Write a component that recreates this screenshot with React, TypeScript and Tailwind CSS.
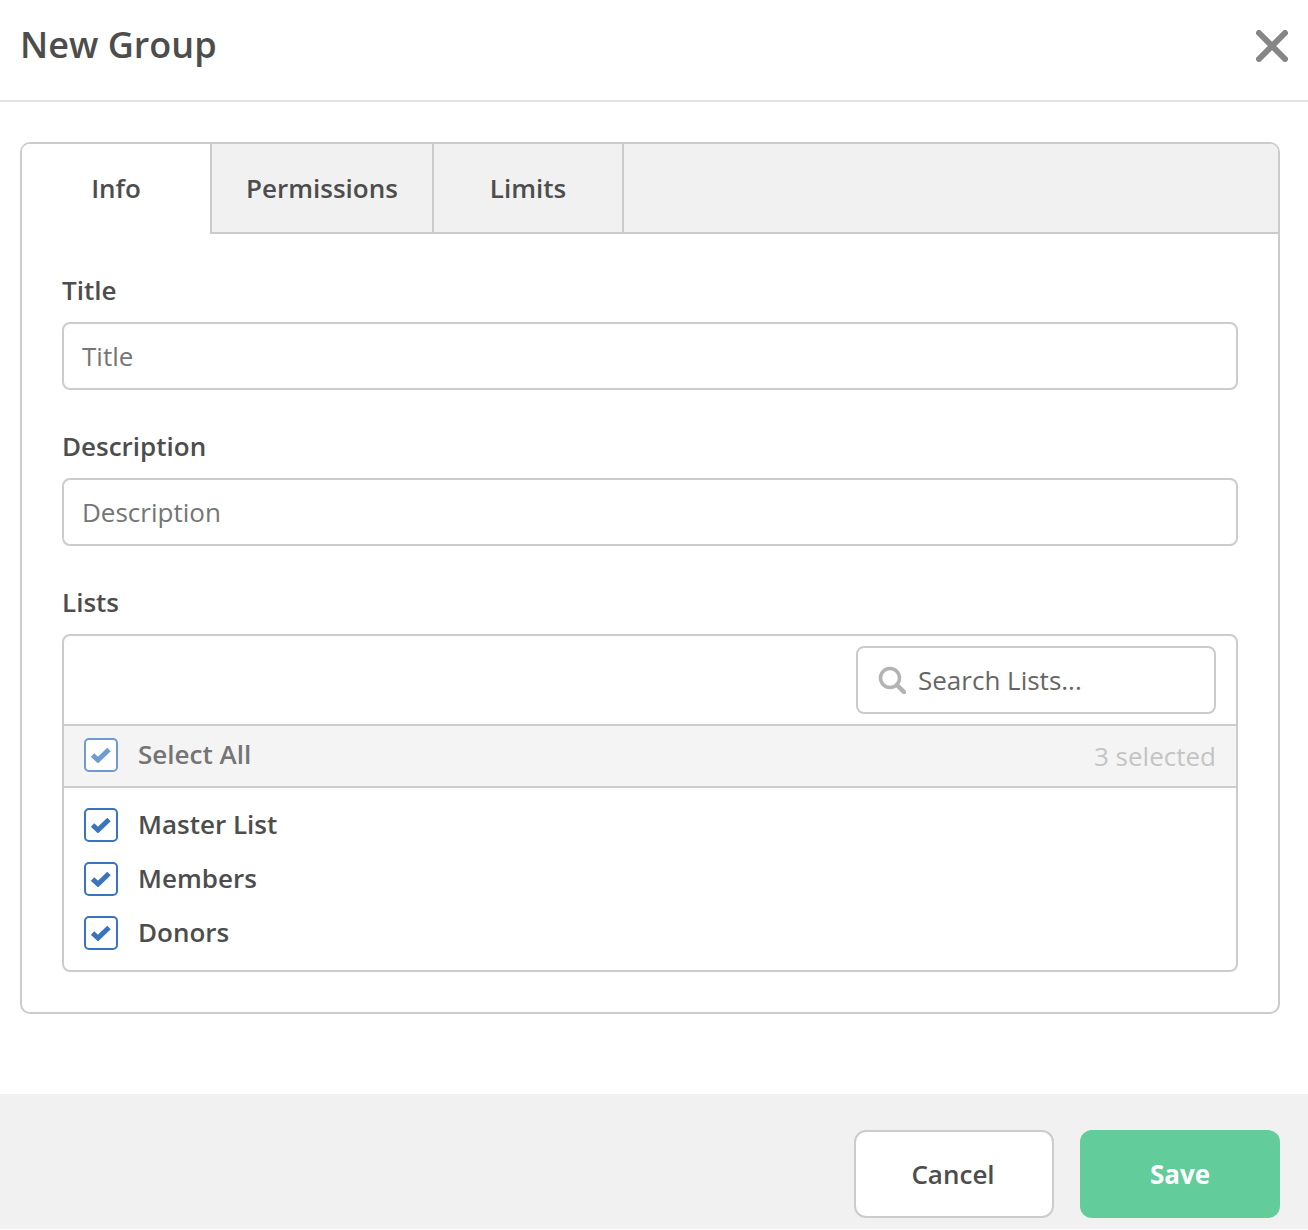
const lists = ["Master List", "Members", "Donors"];

function CheckBox({ faded }: { faded?: boolean }) {
  return (
    <span
      className={`flex h-[34px] w-[34px] shrink-0 items-center justify-center rounded-[5px] border-2 bg-white ${
        faded ? "border-[#6f9bd3]" : "border-[#3a74bd]"
      }`}
    >
      <svg width="20" height="16" viewBox="0 0 20 16">
        <path
          d="M1.5 8 7 13 18 2.5"
          fill="none"
          stroke={faded ? "#6f9bd3" : "#3a74bd"}
          strokeWidth="5"
        />
      </svg>
    </span>
  );
}

function Field({ label }: { label: string }) {
  return (
    <div className="flex flex-col">
      <label className="h-[46px] text-[26px] leading-[28px] font-semibold text-[#4d4d4d]">{label}</label>
      <input
        placeholder={label}
        className="h-[68px] w-full rounded-[8px] border-2 border-[#cccccc] bg-white px-[18px] text-[26px] text-[#4d4d4d] outline-none placeholder:text-[#757575]"
      />
    </div>
  );
}

export default function App() {
  return (
    <div className="flex h-[1230px] w-[1308px] flex-col bg-white font-['Open_Sans',sans-serif]">
      <header className="flex h-[102px] shrink-0 items-center justify-between border-b-2 border-[#e3e3e3] pr-[20px] pb-[12px] pl-[20px]">
        <h1 className="mt-[2px] text-[36px] leading-[44px] font-semibold text-[#4d4d4d]">New Group</h1>
        <button className="mt-[4px] text-[#868686]">
          <svg width="32" height="32" viewBox="0 0 32 32" className="block">
            <path d="M3 3 29 29M29 3 3 29" stroke="currentColor" strokeWidth="6" strokeLinecap="round" />
          </svg>
        </button>
      </header>

      <main className="flex-1 pt-[40px] pr-[28px] pl-[20px]">
        <div className="h-[872px] rounded-[10px] border-2 border-[#cccccc]">
          <nav className="flex h-[90px] overflow-hidden rounded-t-[8px] bg-[#f1f1f1] text-[26px] font-semibold text-[#4d4d4d]">
            <div className="flex w-[190px] items-center justify-center border-r-2 border-[#cccccc] bg-white pb-[2px]">Info</div>
            <div className="flex w-[222px] items-center justify-center border-r-2 border-b-2 border-[#cccccc]">Permissions</div>
            <div className="flex w-[190px] items-center justify-center border-r-2 border-b-2 border-[#cccccc]">Limits</div>
            <div className="flex-1 border-b-2 border-[#cccccc]" />
          </nav>

          <div className="flex flex-col gap-[42px] px-[40px] pt-[42px]">
            <Field label="Title" />
            <Field label="Description" />
            <div className="flex flex-col">
              <label className="h-[46px] text-[26px] leading-[28px] font-semibold text-[#4d4d4d]">Lists</label>
              <div className="h-[338px] rounded-[8px] border-2 border-[#cccccc]">
                <div className="flex h-[88px] justify-end pt-[10px] pr-[20px]">
                  <div className="flex h-[68px] w-[360px] items-center gap-[12px] rounded-[8px] border-2 border-[#cccccc] bg-white pl-[20px]">
                    <svg width="28" height="28" viewBox="0 0 28 28" className="shrink-0 text-[#b3b3b3]">
                      <circle cx="12" cy="12" r="9.5" fill="none" stroke="currentColor" strokeWidth="3.5" />
                      <path d="M19 19 26 26" stroke="currentColor" strokeWidth="4.5" strokeLinecap="round" />
                    </svg>
                    <span className="text-[26px] text-[#666666]">Search Lists...</span>
                  </div>
                </div>
                <div className="flex h-[64px] items-center justify-between border-y-2 border-[#cccccc] bg-[#f4f4f4] px-[20px] pb-[2px]">
                  <div className="flex items-center gap-[20px]">
                    <CheckBox faded />
                    <span className="-mt-[2px] text-[26px] leading-[34px] font-semibold text-[#757575]">Select All</span>
                  </div>
                  <span className="pt-[2px] text-[26px] leading-[34px] text-[#c4c4c4]">3 selected</span>
                </div>
                <ul className="flex flex-col gap-[20px] pt-[20px] pl-[20px]">
                  {lists.map((name) => (
                    <li key={name} className="flex h-[34px] items-center gap-[20px]">
                      <CheckBox />
                      <span className="-mt-[2px] text-[26px] leading-[34px] font-semibold text-[#4d4d4d]">{name}</span>
                    </li>
                  ))}
                </ul>
              </div>
            </div>
          </div>
        </div>
      </main>

      <footer className="mb-[1px] flex h-[135px] shrink-0 items-start justify-end gap-[26px] bg-[#f1f1f1] pt-[36px] pr-[28px]">
        <button className="h-[88px] w-[200px] rounded-[12px] border-2 border-[#cccccc] bg-white pr-[2px] text-[26px] font-semibold text-[#4d4d4d]">Cancel</button>
        <button className="h-[88px] w-[200px] rounded-[12px] bg-[#62cc9b] text-[26px] font-bold text-white">Save</button>
      </footer>
    </div>
  );
}
